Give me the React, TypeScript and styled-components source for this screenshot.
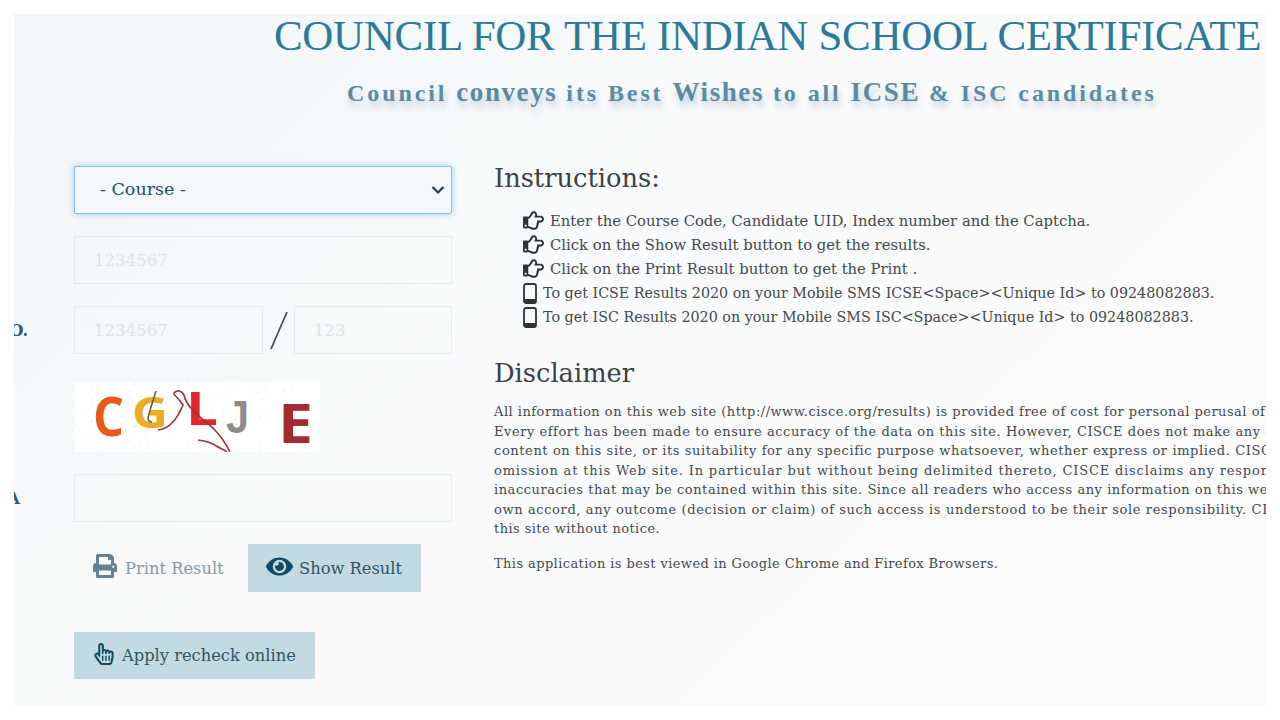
import React from "react";
import styled, { createGlobalStyle } from "styled-components";
import { FaEye, FaPrint, FaRegHandPointer, FaRegHandPointRight } from "react-icons/fa";

const GlobalStyle = createGlobalStyle`
  html, body {
    margin: 0;
    padding: 0;
    background: #ffffff;
  }
`;

const Page = styled.div`
  box-sizing: border-box;
  width: 1252px;
  height: 692px;
  margin: 14px;
  overflow: hidden;
  background: linear-gradient(135deg, #f1f6f8 0%, #f8fafb 40%, #fbfbfb 70%);
  font-family: "DejaVu Serif", "Liberation Serif", serif;
`;

const Title = styled.h1`
  margin: 0;
  padding-left: 260px;
  font-family: "Liberation Serif", serif;
  font-size: 43px;
  line-height: 44px;
  letter-spacing: -0.32px;
  font-weight: 400;
  color: #2b7a98;
  white-space: nowrap;
`;

const Subtitle = styled.h2`
  margin: 19px 0 0;
  padding-left: 333px;
  font-family: "Liberation Serif", serif;
  font-size: 24px;
  line-height: 30px;
  font-weight: 700;
  letter-spacing: 2.9px;
  color: #5b8ba1;
  text-shadow: 2px 6px 6px rgba(90, 120, 140, 0.3);
  white-space: nowrap;

  & > b {
    font-size: 27px;
    letter-spacing: 1.6px;
  }
`;

const Columns = styled.div`
  display: flex;
  margin-top: 43px;
`;

const FormColumn = styled.div`
  flex: none;
  width: 438px;
  margin-top: 15px;
  display: flex;
  flex-direction: column;
`;

const Row = styled.div<{ $mt: number }>`
  display: flex;
  align-items: center;
  margin-top: ${(p) => p.$mt}px;
`;

const Label = styled.label<{ $pr?: number }>`
  flex: none;
  box-sizing: border-box;
  width: 60px;
  display: flex;
  justify-content: flex-end;
  overflow: hidden;
  padding-right: ${(p) => p.$pr ?? 0}px;
  font-size: 16px;
  font-weight: 700;
  white-space: nowrap;
  color: #245d75;
`;

const SelectWrap = styled.div`
  position: relative;
  width: 378px;
  height: 48px;

  & > svg {
    position: absolute;
    right: 7px;
    top: 19px;
    pointer-events: none;
  }
`;

const Select = styled.select`
  box-sizing: border-box;
  display: block;
  width: 100%;
  height: 48px;
  padding: 0 0 2px 25px;
  border: 1px solid #86bdf0;
  border-radius: 2px;
  outline: none;
  appearance: none;
  box-shadow: 0 0 6px rgba(90, 165, 240, 0.55);
  background-color: #f4f8fa;
  font-family: inherit;
  font-size: 17.5px;
  color: #1e4f63;
`;

const Input = styled.input<{ $w: number }>`
  box-sizing: border-box;
  width: ${(p) => p.$w}px;
  height: 48px;
  padding: 0 19px;
  border: 1px solid #e2ecf0;
  background: transparent;
  font-family: inherit;
  font-size: 16.6px;
  outline: none;

  &::placeholder {
    color: #dfe3e5;
    opacity: 1;
  }
`;

const Slash = styled.div`
  flex: none;
  width: 31px;
  height: 39px;
  display: flex;
  justify-content: center;
`;

const Captcha = styled.svg`
  display: block;
  width: 246px;
  height: 71px;
`;

const ButtonRow = styled.div<{ $mt: number }>`
  display: flex;
  gap: 6px;
  margin-top: ${(p) => p.$mt}px;
  margin-left: 60px;
`;

const Button = styled.button<{ $w: number; $h?: number; $gap: number; $pl?: number; $muted?: boolean }>`
  box-sizing: border-box;
  width: ${(p) => p.$w}px;
  height: ${(p) => p.$h ?? 48}px;
  padding: 0 0 0 ${(p) => p.$pl ?? 19}px;
  display: flex;
  align-items: center;
  gap: ${(p) => p.$gap}px;
  border: none;
  background: ${(p) => (p.$muted ? "#f8fafa" : "#c4dae2")};
  color: ${(p) => (p.$muted ? "#8a979c" : "#2f5566")};
  font-family: inherit;
  font-size: 16.3px;

  & > svg {
    flex: none;
    margin-top: -4px;
    color: ${(p) => (p.$muted ? "#628294" : "#124a62")};
  }
`;

const InfoColumn = styled.div`
  flex: none;
  width: 760px;
  margin-left: 42px;
  padding-top: 9px;
  color: #44494c;
`;

const Heading = styled.h3<{ $mt: number }>`
  margin: ${(p) => p.$mt}px 0 0;
  font-family: "DejaVu Serif", serif;
  font-size: 25.7px;
  line-height: 36px;
  font-weight: 400;
  color: #3c4144;
`;

const Steps = styled.ul`
  list-style: none;
  margin: 12px 0 0 29px;
  padding: 0;
`;

const Step = styled.li<{ $size: number; $pt?: number }>`
  box-sizing: border-box;
  display: flex;
  align-items: center;
  gap: 6px;
  height: 24px;
  padding-top: ${(p) => p.$pt ?? 0}px;
  font-size: ${(p) => p.$size}px;
  white-space: nowrap;

  & > svg {
    flex: none;
    color: #2e3336;
  }
`;

const Legal = styled.p<{ $mt: number }>`
  margin: ${(p) => p.$mt}px 0 0;
  font-size: 13px;
  letter-spacing: 0.4px;
  line-height: 19.5px;
  white-space: nowrap;
`;

const LegalLine = styled.span<{ $ls: number }>`
  display: block;
  letter-spacing: ${(p) => p.$ls}px;
`;

const MobileIcon = () => (
  <svg width="14" height="21" viewBox="0 0 14 21">
    <rect x="1" y="1" width="12" height="19" rx="2" fill="none" stroke="#2e3336" strokeWidth="1.8" />
    <rect x="1" y="16" width="12" height="4" fill="#2e3336" />
  </svg>
);

const noise = Array.from({ length: 150 }, (_, i) => ({
  x: (i * i * 37 + i * 91) % 246,
  y: (i * i * 13 + i * 29) % 71,
}));

const captchaLetters = [
  { ch: "C", x: 19, y: 55, size: 54, w: 31, fill: "#e8591a", family: "'Open Sans', sans-serif" },
  { ch: "G", x: 58, y: 47, size: 43, w: 36, fill: "#e9ac22", family: "'Open Sans', sans-serif" },
  { ch: "L", x: 112, y: 44, size: 46, w: 32, fill: "#e3262a", family: "'Open Sans', sans-serif" },
  { ch: "J", x: 152, y: 52, size: 47, w: 23, fill: "#8b8b8b", family: "'Liberation Sans', sans-serif" },
  { ch: "E", x: 204, y: 62, size: 53, w: 35, fill: "#a42b2f", family: "'Open Sans', sans-serif" },
];

const CaptchaImage = () => (
  <Captcha viewBox="0 0 246 71">
    <rect width="246" height="71" fill="#ffffff" />
    {noise.map((d, i) => (
      <circle key={i} cx={d.x} cy={d.y} r="0.6" fill="#d4d8da" />
    ))}
    {captchaLetters.map((l) => (
      <text
        key={l.ch}
        x={l.x}
        y={l.y}
        fontFamily={l.family}
        fontWeight="700"
        fontSize={l.size}
        fill={l.fill}
        textLength={l.w}
        lengthAdjust="spacingAndGlyphs"
      >
        {l.ch}
      </text>
    ))}
    <path d="M82 10 C79 20 76 28 74 37 C74 40 76 41 78 41" fill="none" stroke="#6a5038" strokeWidth="1.5" />
    <path
      d="M84 49 C96 48 104 36 109 24 C104 16 99 14 100 12 C103 8 108 10 110 14 C112 26 128 38 139 47 C147 55 152 63 156 71 M124 59 C132 60 140 63 144 66 C148 68 151 69 153 71"
      fill="none"
      stroke="#963a3e"
      strokeWidth="1.7"
    />
  </Captcha>
);

const steps = [
  "Enter the Course Code, Candidate UID, Index number and the Captcha.",
  "Click on the Show Result button to get the results.",
  "Click on the Print Result button to get the Print .",
];

const smsSteps = [
  "To get ICSE Results 2020 on your Mobile SMS ICSE<Space><Unique Id> to 09248082883.",
  "To get ISC Results 2020 on your Mobile SMS ISC<Space><Unique Id> to 09248082883.",
];

const disclaimer = [
  { text: "All information on this web site (http://www.cisce.org/results) is provided free of cost for personal perusal of", ls: 0.49 },
  { text: "Every effort has been made to ensure accuracy of the data on this site. However, CISCE does not make any claim", ls: 0.55 },
  { text: "content on this site, or its suitability for any specific purpose whatsoever, whether express or implied. CISCE", ls: 0.6 },
  { text: "omission at this Web site. In particular but without being delimited thereto, CISCE disclaims any responsibility", ls: 0.83 },
  { text: "inaccuracies that may be contained within this site. Since all readers who access any information on this web", ls: 0.54 },
  { text: "own accord, any outcome (decision or claim) of such access is understood to be their sole responsibility. CISCE", ls: 0.62 },
  { text: "this site without notice.", ls: 0.42 },
];

export default function App() {
  return (
    <>
      <GlobalStyle />
      <Page>
        <Title>COUNCIL FOR THE INDIAN SCHOOL CERTIFICATE</Title>
        <Subtitle>
          Council <b>conveys</b> its Best <b>Wishes</b> to all <b>ICSE</b> &amp; ISC candidates
        </Subtitle>
        <Columns>
          <FormColumn>
            <Row $mt={0}>
              <Label />
              <SelectWrap>
                <Select defaultValue="">
                  <option value="">- Course -</option>
                </Select>
                <svg width="14" height="10" viewBox="0 0 14 10">
                  <path d="M1.5 2 L7 7.5 L12.5 2" fill="none" stroke="#1e3f50" strokeWidth="2.2" />
                </svg>
              </SelectWrap>
            </Row>
            <Row $mt={22}>
              <Label />
              <Input $w={378} placeholder="1234567" />
            </Row>
            <Row $mt={22}>
              <Label $pr={46}>INDEX NO.</Label>
              <Input $w={189} placeholder="1234567" />
              <Slash>
                <svg width="22" height="39" viewBox="0 0 22 39">
                  <line x1="19" y1="1" x2="3" y2="38" stroke="#4b5052" strokeWidth="1.8" />
                </svg>
              </Slash>
              <Input $w={158} placeholder="123" />
            </Row>
            <Row $mt={27}>
              <Label />
              <CaptchaImage />
            </Row>
            <Row $mt={22}>
              <Label $pr={54}>CAPTCHA</Label>
              <Input $w={378} />
            </Row>
            <ButtonRow $mt={22}>
              <Button $w={168} $gap={8} $muted>
                <FaPrint size={24} />
                Print Result
              </Button>
              <Button $w={173} $gap={6} $pl={18}>
                <FaEye size={27} />
                Show Result
              </Button>
            </ButtonRow>
            <ButtonRow $mt={40}>
              <Button $w={241} $h={47} $gap={7}>
                <FaRegHandPointer size={22} />
                Apply recheck online
              </Button>
            </ButtonRow>
          </FormColumn>
          <InfoColumn>
            <Heading $mt={0}>Instructions:</Heading>
            <Steps>
              {steps.map((s) => (
                <Step key={s} $size={14.8}>
                  <FaRegHandPointRight size={21} />
                  {s}
                </Step>
              ))}
              {smsSteps.map((s) => (
                <Step key={s} $size={14.3} $pt={2}>
                  <MobileIcon />
                  {s}
                </Step>
              ))}
            </Steps>
            <Heading $mt={27}>Disclaimer</Heading>
            <Legal $mt={11}>
              {disclaimer.map((l) => (
                <LegalLine key={l.text} $ls={l.ls}>
                  {l.text}
                </LegalLine>
              ))}
            </Legal>
            <Legal $mt={15}>This application is best viewed in Google Chrome and Firefox Browsers.</Legal>
          </InfoColumn>
        </Columns>
      </Page>
    </>
  );
}
